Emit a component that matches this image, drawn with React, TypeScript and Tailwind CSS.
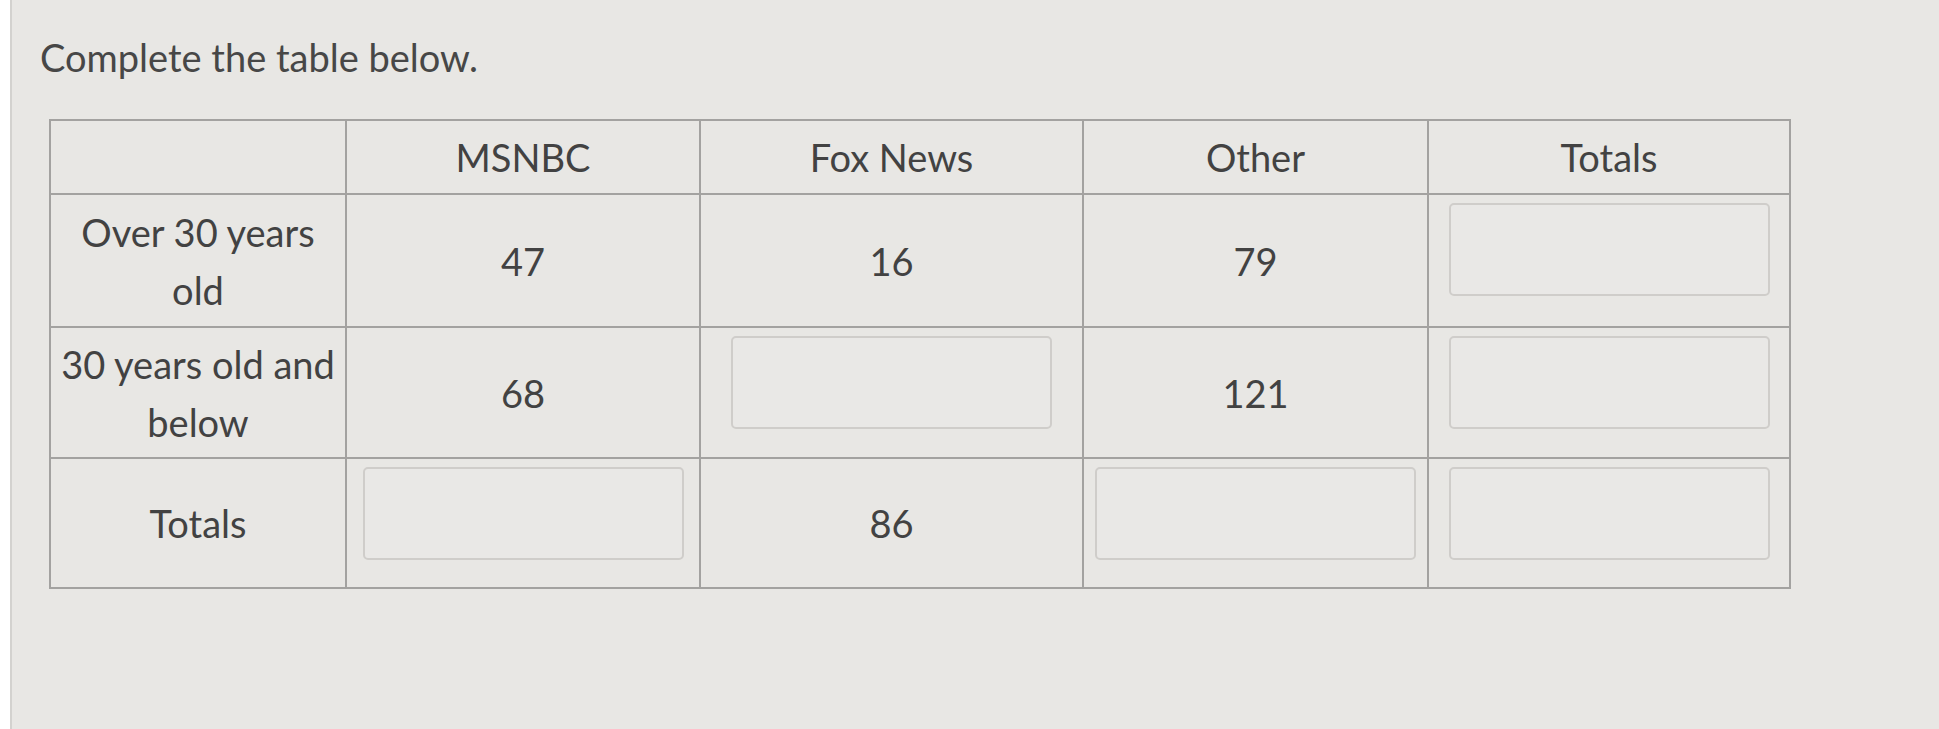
import React from "react";

const font = { fontFamily: "Lato, 'Open Sans', sans-serif" };

function Box() {
  return (
    <div className="mx-auto mt-[8px] h-[93px] w-[321px] rounded-[5px] border-2 border-[#cfcdca] bg-[#e9e8e6]" />
  );
}

function Cell({ children, w, input }: { children?: React.ReactNode; w: string; input?: boolean }) {
  return (
    <td
      className={`${w} border-2 border-[#a3a2a0] p-0 text-center ${input ? "align-top" : "align-middle"}`}
    >
      {input ? <Box /> : children}
    </td>
  );
}

export default function App() {
  return (
    <div
      className="ml-[10px] h-[729px] w-[1939px] overflow-hidden border-l-2 border-[#d3d2cf] bg-[#e8e7e4] text-[#424242]"
      style={font}
    >
      <div className="pl-[28px] pt-[33px] text-[38px] leading-[48px] text-[#474747]">
        Complete the table below.
      </div>
      <table className="ml-[37px] mt-[38px] w-[1740px] table-fixed border-collapse text-[38px] leading-[58px]">
        <tbody>
          <tr className="h-[74px]">
            <Cell w="w-[296px]" />
            <Cell w="w-[354px]">MSNBC</Cell>
            <Cell w="w-[383px]">Fox News</Cell>
            <Cell w="w-[345px]">Other</Cell>
            <Cell w="w-[362px]">Totals</Cell>
          </tr>
          <tr className="h-[133px]">
            <Cell w="w-[296px]">
              Over 30 years
              <br />
              old
            </Cell>
            <Cell w="w-[354px]">47</Cell>
            <Cell w="w-[383px]">16</Cell>
            <Cell w="w-[345px]">79</Cell>
            <Cell w="w-[362px]" input />
          </tr>
          <tr className="h-[131px]">
            <Cell w="w-[296px]">
              30 years old and
              <br />
              below
            </Cell>
            <Cell w="w-[354px]">68</Cell>
            <Cell w="w-[383px]" input />
            <Cell w="w-[345px]">121</Cell>
            <Cell w="w-[362px]" input />
          </tr>
          <tr className="h-[130px]">
            <Cell w="w-[296px]">Totals</Cell>
            <Cell w="w-[354px]" input />
            <Cell w="w-[383px]">86</Cell>
            <Cell w="w-[345px]" input />
            <Cell w="w-[362px]" input />
          </tr>
        </tbody>
      </table>
    </div>
  );
}
